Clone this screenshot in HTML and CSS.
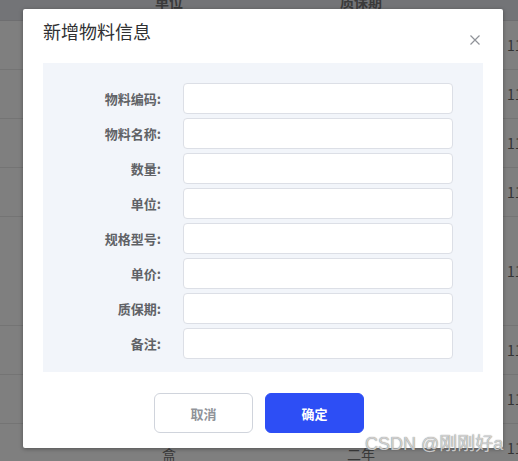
FILE: index.html
```html
<!DOCTYPE html>
<html lang="zh">
<head>
<meta charset="utf-8">
<link rel="stylesheet" href="styles.css">
</head>
<body>
<div class="table">
  <div class="row head"><span class="h1">单位</span><span class="h2">质保期</span></div>
  <div class="row"><span class="c3">11</span></div>
  <div class="row"><span class="c3">11</span></div>
  <div class="row"><span class="c3">11</span></div>
  <div class="row"><span class="c3">11</span></div>
  <div class="row tall"><span class="c3">11</span></div>
  <div class="row"><span class="c3">11</span></div>
  <div class="row"><span class="c3">11</span></div>
  <div class="row last"><span class="c1b">盒</span><span class="c2b">二年</span><span class="c3">11</span></div>
</div>

<div class="dialog">
  <div class="dlg-head">
    <span class="title">新增物料信息</span>
    <svg class="close" width="10" height="10" viewBox="0 0 10 10"><path d="M0.5 0.5L9.5 9.5M9.5 0.5L0.5 9.5" stroke="#909399" stroke-width="1.2" fill="none"/></svg>
  </div>
  <div class="form">
    <div class="item"><label>物料编码:</label><div class="input"></div></div>
    <div class="item"><label>物料名称:</label><div class="input"></div></div>
    <div class="item"><label>数量:</label><div class="input"></div></div>
    <div class="item"><label>单位:</label><div class="input"></div></div>
    <div class="item"><label>规格型号:</label><div class="input"></div></div>
    <div class="item"><label>单价:</label><div class="input"></div></div>
    <div class="item"><label>质保期:</label><div class="input"></div></div>
    <div class="item"><label>备注:</label><div class="input"></div></div>
  </div>
  <div class="footer">
    <button class="btn cancel">取消</button>
    <button class="btn ok">确定</button>
  </div>
</div>

<div class="watermark">CSDN @刚刚好a</div>
</body>
</html>
```

FILE: styles.css
```css
html, body {
  margin: 0;
  padding: 0;
}
body {
  width: 518px;
  height: 461px;
  overflow: hidden;
  background: #7f7f7f;
  font-family: "Noto Sans CJK SC", "Noto Sans", sans-serif;
  position: relative;
}
.table {
  display: flex;
  flex-direction: column;
}
.row {
  height: 48px;
  border-bottom: 1px solid #747474;
  position: relative;
  color: #3a3a3a;
  font-size: 14px;
}
.row.head {
  height: 20px;
  background: #737477;
  border-bottom: 1px solid #6e6e70;
  font-weight: bold;
}
.row.tall { height: 108px; }
.row.last { border-bottom: none; height: 40px; }
.h1 { position: absolute; left: 155px; top: -9px; }
.h2 { position: absolute; left: 340px; top: -9px; }
.c3 { position: absolute; left: 507px; top: 50%; transform: translateY(-50%); color: #333; }
.row.last .c3 { top: 14px; transform: none; }
.c1b { position: absolute; left: 162px; top: 20px; }
.c2b { position: absolute; left: 347px; top: 20px; }

.dialog {
  position: absolute;
  left: 23px;
  top: 9px;
  width: 480px;
  height: 439px;
  background: #fff;
  border-radius: 2px;
  box-shadow: 0 1px 4px rgba(0, 0, 0, 0.35);
  box-sizing: border-box;
  padding: 0 20px;
}
.dlg-head {
  height: 54px;
  display: flex;
  justify-content: space-between;
  align-items: flex-start;
  padding-top: 10px;
  box-sizing: border-box;
}
.title {
  font-size: 18px;
  line-height: 24px;
  color: #303133;
}
.close {
  margin-top: 16px;
  margin-right: 3px;
}
.form {
  background: #f2f5fa;
  height: 309px;
  box-sizing: border-box;
  padding: 20px 30px 0 20px;
  display: flex;
  flex-direction: column;
  gap: 4px;
}
.item {
  display: flex;
  align-items: center;
  height: 31px;
}
.item label {
  width: 120px;
  box-sizing: border-box;
  padding-right: 22px;
  text-align: right;
  font-size: 13px;
  font-weight: bold;
  color: #606266;
}
.input {
  width: 270px;
  height: 31px;
  box-sizing: border-box;
  background: #fff;
  border: 1px solid #dcdfe6;
  border-radius: 4px;
}
.footer {
  display: flex;
  gap: 12px;
  padding-left: 111px;
  padding-top: 21px;
}
.btn {
  width: 99px;
  height: 40px;
  border-radius: 6px;
  font-family: "Noto Sans CJK SC", sans-serif;
  font-size: 13px;
  font-weight: bold;
  padding: 0;
  cursor: pointer;
}
.cancel {
  background: #fff;
  border: 1px solid #d0d4dc;
  color: #909399;
}
.ok {
  background: #2d4ef5;
  border: 1px solid #2d4ef5;
  color: #fff;
}
.watermark {
  position: absolute;
  left: 365px;
  top: 429px;
  font-family: "Liberation Sans", "Noto Sans CJK SC", sans-serif;
  font-size: 18px;
  color: rgba(230, 230, 230, 0.8);
  text-shadow: 0 0 1px rgba(80, 80, 80, 0.9);
  white-space: nowrap;
}
```
